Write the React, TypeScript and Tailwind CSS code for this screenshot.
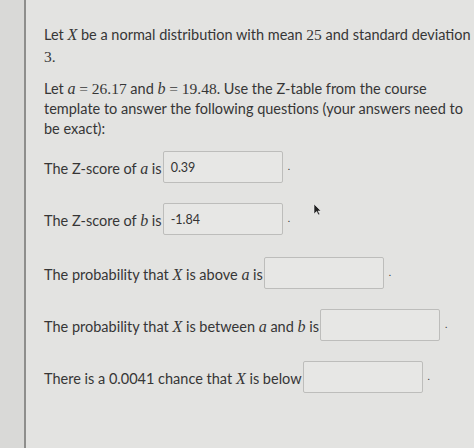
const M = ({ children }: { children: React.ReactNode }) => (
  <span className="font-['Liberation_Serif',serif] text-[15.5px]">{children}</span>
);
const V = ({ children }: { children: React.ReactNode }) => (
  <span className="font-['Liberation_Serif',serif] italic text-[16px]">{children}</span>
);

const Row = ({
  label,
  value,
  width = "w-[120px]",
}: {
  label: React.ReactNode;
  value?: string;
  width?: string;
}) => (
  <div className="flex items-center h-[32px] mb-[20px]">
    <span className="pt-[4px] whitespace-nowrap">{label}</span>
    <div
      className={`ml-[1px] h-[32px] ${width} shrink-0 border border-[#bdbdbb] bg-[#e7e7e5] rounded-[2px] px-[7px] pt-[6px] text-[12.5px] text-[#333]`}
    >
      {value}
    </div>
    <span className="self-end ml-[5px] mb-[7px] text-[10px]">.</span>
  </div>
);

export default function App() {
  return (
    <div className="relative flex w-[474px] h-[448px] bg-[#e3e3e1] overflow-hidden font-['Lato',sans-serif] text-[14.5px] leading-[20px] text-[#363636]">
      <div className="w-[26px] shrink-0 bg-[#d9d9d7] border-r-2 border-[#8e8e8c]" />
      <div className="pl-[18px] pt-[24px] flex-1">
        <p className="leading-[22px]">
          Let <V>X</V> be a normal distribution with mean <M>25</M> and standard deviation <M>3.</M>
        </p>
        <p className="mt-[11px] mb-[12px] pr-[10px]">
          Let <V>a</V> <M>= 26.17</M> and <V>b</V> <M>= 19.48</M>. Use the Z-table from the course
          template to answer the following questions (your answers need to be exact):
        </p>
        <Row label={<>The Z-score of <V>a</V> is</>} value="0.39" />
        <Row label={<>The Z-score of <V>b</V> is</>} value="-1.84" />
        <div className="h-[2px]" />
        <Row label={<>The probability that <V>X</V> is above <V>a</V> is</>} />
        <Row label={<>The probability that <V>X</V> is between <V>a</V> and <V>b</V> is</>} />
        <Row label={<>There is a 0.0041 chance that <V>X</V> is below</>} />
      </div>
      <svg className="absolute left-[313px] top-[203px]" width="9" height="13" viewBox="0 0 9 13">
        <path d="M1 1 L1 11 L3.5 8.5 L5.5 12 L7 11.3 L5 8 L8 8 Z" fill="#222" stroke="#eee" strokeWidth="0.6" />
      </svg>
    </div>
  );
}
